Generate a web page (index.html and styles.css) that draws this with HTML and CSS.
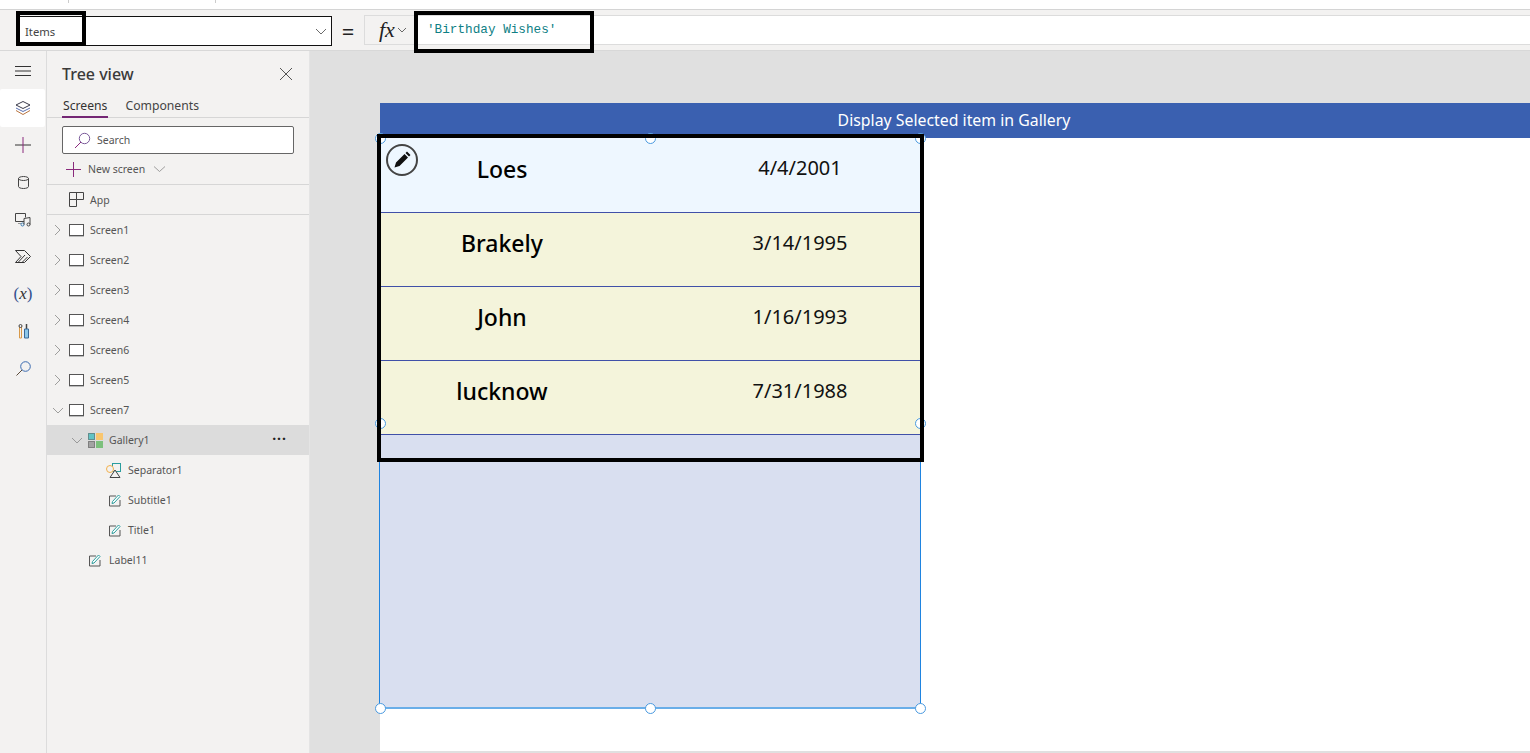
FILE: index.html
```html
<!DOCTYPE html>
<html lang="en">
<head>
<meta charset="utf-8">
<title>Tree view</title>
<link rel="stylesheet" href="styles.css">
</head>
<body>
<div class="strip"><i class="tick t1"></i><i class="tick t2"></i></div>
<div class="fbar">
  <div class="prop"><span class="prop-name">Items</span>
    <svg class="ic10" viewBox="0 0 10 10"><path d="M0 3l5 5 5-5" fill="none" stroke="#444" stroke-width=".8"/></svg>
  </div>
  <div class="eq">=</div>
  <div class="fxwrap">
    <div class="fx"><span class="fxt">fx</span><svg class="ic10" viewBox="0 0 10 10"><path d="M1 3l4 4 4-4" fill="none" stroke="#444" stroke-width=".8"/></svg></div>
    <div class="formula">'Birthday Wishes'</div>
  </div>
  <div class="mark mark-prop"></div>
  <div class="mark mark-formula"></div>
</div>
<div class="main">
  <nav class="rail">
    <div class="rail-i"><svg width="16" height="12" viewBox="0 0 16 12"><path d="M0 1.500h16M0 6h16M0 10.500h16" stroke="#333" fill="none"/></svg></div>
    <div class="rail-i on"><svg width="16" height="14" viewBox="0 0 16 14" fill="none"><path d="M8 .5l7 3.500-7 3.500-7-3.500z" stroke="#3a3a4a"/><path d="M1 7l7 3.500L15 7" stroke="#5a6fb0"/><path d="M1 9.500L8 13.500l7-4" stroke="#b8743f"/></svg></div>
    <div class="rail-i"><svg width="16" height="16" viewBox="0 0 16 16"><path d="M0 8h16" stroke="#333"/><path d="M8 0v16" stroke="#8a2a7c"/></svg></div>
    <div class="rail-i"><svg width="11" height="13" viewBox="0 0 11 13" fill="none" stroke="#444"><path d="M.5 2.500c0-1 2-2 5-2s5 1 5 2-2 2-5 2-5-1-5-2zM.5 2.500v8c0 1 2 2 5 2s5-1 5-2v-8"/></svg></div>
    <div class="rail-i"><svg width="16" height="14" viewBox="0 0 16 14" fill="none"><path d="M9 8.500H.5V.5h10v4" stroke="#444"/><path d="M3 10.500h3" stroke="#999"/><circle cx="7.500" cy="11.500" r="1.500" stroke="#3a7ab0"/><path d="M9 11.500V5.500l6-1v7" stroke="#444"/><circle cx="13.500" cy="11.500" r="1.500" stroke="#444"/></svg></div>
    <div class="rail-i"><svg width="16" height="13" viewBox="0 0 16 13" fill="none" stroke="#333"><path d="M.5.5h9l6 6-6 6h-9l5.500-6z"/><path d="M3 12.500L10 5M7 12.500l5.500-5.500"/></svg></div>
    <div class="rail-i"><span class="var"><span class="par">(</span><em>x</em><span class="par">)</span></span></div>
    <div class="rail-i"><svg width="11" height="15" viewBox="0 0 11 15" fill="none"><path d="M1.500 3v11h2V3" stroke="#d89a4a"/><circle cx="2.500" cy="2" r="1.500" stroke="#444"/><path d="M8.500 0v5" stroke="#444" stroke-width="1.500"/><path d="M6.500 5h4v9h-4z" fill="#8fc8ea" stroke="#3a6a9a"/></svg></div>
    <div class="rail-i"><svg width="15" height="15" viewBox="0 0 15 15" fill="none"><circle cx="9.500" cy="5.500" r="4.800" stroke="#3a6ab0"/><path d="M6 9L.5 14.500" stroke="#5a4a3a"/></svg></div>
  </nav>
  <aside class="tree">
    <div class="tree-head"><span class="tree-title">Tree view</span>
      <svg width="12" height="12" viewBox="0 0 12 12"><path d="M0 0l12 12M12 0L0 12" stroke="#555" fill="none"/></svg>
    </div>
    <div class="tabs"><span class="tab active">Screens</span><span class="tab">Components</span></div>
    <div class="search-wrap"><div class="search">
      <svg width="17" height="17" viewBox="0 0 17 17" fill="none"><circle cx="10.500" cy="6.500" r="5.200" stroke="#7a5a9a"/><path d="M7 10l-6 6" stroke="#8a2a7c"/></svg>
      <span>Search</span></div></div>
    <div class="new-screen">
      <svg width="15" height="15" viewBox="0 0 15 15"><path d="M0 7.500h15M7.500 0v15" stroke="#8a2a7c"/></svg>
      <span>New screen</span>
      <svg class="ic11" viewBox="0 0 11 10"><path d="M0 2.500l5.500 5 5.500-5" fill="none" stroke="#888" stroke-width=".8"/></svg>
    </div>
    <div class="row app">
      <svg width="15" height="15" viewBox="0 0 15 15" fill="none" stroke="#444"><path d="M.5.500h14v7h-7v7h-7zM.5 7.500h7M7.500.500v7"/></svg>
      <span class="lbl">App</span>
    </div>
    <div class="row lv1"><svg class="chev" viewBox="0 0 7 10"><path d="M1 0l5 5-5 5" fill="none" stroke="#888" stroke-width=".8"/></svg><span class="scr"></span><span class="lbl">Screen1</span></div>
    <div class="row lv1"><svg class="chev" viewBox="0 0 7 10"><path d="M1 0l5 5-5 5" fill="none" stroke="#888" stroke-width=".8"/></svg><span class="scr"></span><span class="lbl">Screen2</span></div>
    <div class="row lv1"><svg class="chev" viewBox="0 0 7 10"><path d="M1 0l5 5-5 5" fill="none" stroke="#888" stroke-width=".8"/></svg><span class="scr"></span><span class="lbl">Screen3</span></div>
    <div class="row lv1"><svg class="chev" viewBox="0 0 7 10"><path d="M1 0l5 5-5 5" fill="none" stroke="#888" stroke-width=".8"/></svg><span class="scr"></span><span class="lbl">Screen4</span></div>
    <div class="row lv1"><svg class="chev" viewBox="0 0 7 10"><path d="M1 0l5 5-5 5" fill="none" stroke="#888" stroke-width=".8"/></svg><span class="scr"></span><span class="lbl">Screen6</span></div>
    <div class="row lv1"><svg class="chev" viewBox="0 0 7 10"><path d="M1 0l5 5-5 5" fill="none" stroke="#888" stroke-width=".8"/></svg><span class="scr"></span><span class="lbl">Screen5</span></div>
    <div class="row lv1"><svg class="chevd" viewBox="0 0 10 7"><path d="M0 1l5 5 5-5" fill="none" stroke="#888" stroke-width=".8"/></svg><span class="scr"></span><span class="lbl">Screen7</span></div>
    <div class="row lv2 sel"><svg class="chevd" viewBox="0 0 10 7"><path d="M0 1l5 5 5-5" fill="none" stroke="#888" stroke-width=".8"/></svg>
      <svg class="gal" width="15" height="15" viewBox="0 0 15 15"><rect width="7" height="7" fill="#62c4c4"/><rect x="8" width="7" height="7" fill="#f9c66e"/><rect y="8" width="7" height="7" fill="#a3a3a3"/><rect x="8" y="8" width="7" height="7" fill="#7cc07c"/><path d="M.5.500h6v6h-6zM.5 8.500h6v6h-6z" fill="none" stroke="#666" stroke-width=".6"/></svg>
      <span class="lbl">Gallery1</span><span class="dots">···</span></div>
    <div class="row lv3"><svg width="15" height="15" viewBox="0 0 15 15" fill="none"><rect x="6.500" y=".5" width="8" height="8" stroke="#2a9d9d"/><circle cx="4" cy="6" r="3.500" fill="#f3f2f1" stroke="#f2b04c"/><path d="M9 7l5 7.500H4z" fill="#f3f2f1" stroke="#444"/></svg><span class="lbl">Separator1</span></div>
    <div class="row lv3"><svg width="15" height="14" viewBox="-3 -1 15 14" fill="none"><path d="M7 2H.5v10H11V6" stroke="#555"/><path d="M3 9.500l.5-2 6-6.500 1.500 1.500-6 6.500z" fill="#fff" stroke="#2a9d9d"/></svg><span class="lbl">Subtitle1</span></div>
    <div class="row lv3"><svg width="15" height="14" viewBox="-3 -1 15 14" fill="none"><path d="M7 2H.5v10H11V6" stroke="#555"/><path d="M3 9.500l.5-2 6-6.500 1.500 1.500-6 6.500z" fill="#fff" stroke="#2a9d9d"/></svg><span class="lbl">Title1</span></div>
    <div class="row lv2b"><svg width="12" height="14" viewBox="0 -1 12 14" fill="none"><path d="M7 2H.5v10H11V6" stroke="#555"/><path d="M3 9.500l.5-2 6-6.500 1.500 1.500-6 6.500z" fill="#fff" stroke="#2a9d9d"/></svg><span class="lbl">Label11</span></div>
  </aside>
  <section class="canvas">
    <div class="screen">
      <header class="banner">Display Selected item in Gallery</header>
      <div class="gallery">
        <div class="item first"><span class="name">Loes</span><span class="date">4/4/2001</span>
          <svg class="edit" width="32" height="32" viewBox="0 0 32 32"><circle cx="16" cy="16" r="15" fill="none" stroke="#444" stroke-width="2"/><path d="M8.500 23.500l1.500-5 8.500-8.500 3.500 3.500-8.500 8.500zM19.500 9l1.500-1.500 3.500 3.500-1.500 1.500z" fill="#111"/></svg>
        </div>
        <div class="item"><span class="name">Brakely</span><span class="date">3/14/1995</span></div>
        <div class="item"><span class="name">John</span><span class="date">1/16/1993</span></div>
        <div class="item"><span class="name">lucknow</span><span class="date">7/31/1988</span></div>
        <i class="h tl"></i><i class="h tm"></i><i class="h tr"></i>
        <i class="h ml"></i><i class="h mr"></i>
        <i class="h bl"></i><i class="h bm"></i><i class="h br"></i>
        <div class="mark mark-gal"></div>
      </div>
    </div>
  </section>
</div>
</body>
</html>
```
FILE: styles.css
```css
* { box-sizing: border-box; }
html, body { margin: 0; height: 753px; overflow: hidden; }
body { background: #fff; font-family: "Noto Sans", "Open Sans", sans-serif; color: #333; }

.strip { height: 10px; background: #fff; border-bottom: 1px solid #d4d4d4; position: relative; }
.tick { position: absolute; top: 0; width: 1px; height: 3px; background: #ccc; }
.t1 { left: 68px; }
.t2 { left: 215px; }

.fbar { height: 41px; background: #f3f2f1; border-bottom: 1px solid #d8d8d8; display: flex; align-items: flex-start; padding: 5px 0 0 17px; position: relative; }
.prop { width: 315px; height: 30px; margin-top: 1px; background: #fff; border: 1px solid #111; display: flex; align-items: center; justify-content: space-between; padding: 0 5px 0 7px; }
.prop-name { font-size: 11.300px; color: #444; margin-top: 1px; }
.ic10 { width: 10px; height: 10px; flex: none; }
.ic11 { width: 11px; height: 10px; flex: none; margin-left: 2px; }
.eq { width: 32px; text-align: center; font-size: 22px; line-height: 32px; color: #222; }
.fxwrap { flex: 1; height: 30px; display: flex; border: 1px solid #dcdcdc; border-right: 0; }
.fx { width: 50px; display: flex; align-items: center; gap: 2px; padding-left: 14px; flex: none; }
.fxt { font-family: "Liberation Serif", serif; font-style: italic; font-size: 22px; color: #222; }
.formula { flex: 1; background: #fff; border-left: 1px solid #d0d0d0; font-family: "Liberation Mono", "DejaVu Sans Mono", monospace; font-size: 12.700px; color: #0f7f85; padding: 6px 0 0 11px; }

.mark { position: absolute; border: 4px solid #000; pointer-events: none; }
.mark-prop { left: 16px; top: 1px; width: 70px; height: 35px; }
.mark-formula { left: 414px; top: 1px; width: 180px; height: 42px; }
.mark-gal { left: -3px; top: -4px; width: 547px; height: 328px; }

.main { display: flex; height: 702px; }
.rail { width: 47px; background: #f3f2f1; border-right: 1px solid #dcdcdc; display: flex; flex-direction: column; padding-top: 1px; flex: none; }
.rail-i { height: 37.250px; display: flex; align-items: center; justify-content: center; }
.rail-i.on { background: #fff; margin-right: 1px; border-radius: 2px; }
.var { font-family: "Liberation Serif", serif; font-size: 17px; color: #333; }
.var .par { color: #33508f; }

.tree { width: 263px; background: #f3f2f1; border-right: 1px solid #e4e4e4; flex: none; }
.tree-head { height: 46px; padding: 0 17px 0 15px; display: flex; align-items: center; justify-content: space-between; }
.tree-title { font-size: 16px; font-weight: 500; color: #3b3a39; }
.tabs { height: 21px; border-bottom: 1px solid #d6d6d6; display: flex; gap: 16px; padding-left: 15px; }
.tab { font-size: 12.200px; line-height: 17px; height: 21px; color: #444; padding: 0 1px; }
.tab.active { color: #333; border-bottom: 2px solid #742774; }
.search-wrap { padding: 8px 15px 0; }
.search { height: 28px; border: 1px solid #666; border-radius: 2px; background: #fff; display: flex; align-items: center; gap: 6px; padding-left: 11px; font-size: 10.500px; color: #555; }
.new-screen { height: 31px; padding-left: 19px; display: flex; align-items: center; gap: 7px; font-size: 10.500px; color: #555; border-bottom: 1px solid #d6d6d6; }
.row { height: 30px; display: flex; align-items: center; font-size: 10.500px; color: #555; position: relative; }
.app { padding-left: 22px; gap: 6px; border-bottom: 1px solid #d6d6d6; }
.lv1 { padding-left: 7px; }
.chev { width: 7px; height: 10px; margin-right: 8px; flex: none; }
.chevd { width: 10px; height: 7px; margin-right: 6px; flex: none; }
.lv1 .chevd { margin-left: -1px; }
.scr { width: 15px; height: 12px; border: 1px solid #555; background: #fff; box-shadow: 0 1px 0 #bbb; margin-right: 6px; flex: none; }
.lv2 { padding-left: 25px; }
.sel { background: #dcdcdc; }
.gal { margin-right: 6px; }
.dots { position: absolute; right: 22px; top: 6px; font-size: 14px; font-weight: 700; color: #222; letter-spacing: 1px; line-height: 16px; }
.lv3 { padding-left: 59px; gap: 7px; }
.lv2b { padding-left: 42px; gap: 8px; }

.canvas { flex: 1; background: #e0e0e0; padding: 52px 0 0 70px; min-width: 0; }
.screen { height: 648px; background: #fff; }
.banner { height: 35px; background: #3a60b0; color: #fff; text-align: center; font-size: 15.850px; line-height: 34px; padding-right: 2px; }
.gallery { width: 542px; height: 571px; margin-left: -1px; background: #d9dff0; border: 1px solid #1f84e0; border-top: 0; border-bottom: 2px solid #6aaee8; position: relative; }
.item { height: 74px; background: #f4f4db; border-bottom: 1px solid #4050a8; position: relative; color: #000; }
.item.first { height: 75px; background: #eef7ff; }
.name { position: absolute; left: 0; width: 244px; text-align: center; top: 12px; font-size: 23px; line-height: 36px; font-weight: 500; }
.first .name { top: 13px; }
.date { position: absolute; left: 340px; width: 160px; text-align: center; top: 13px; font-size: 20px; line-height: 34px; color: #111; }
.edit { position: absolute; left: 6px; top: 6px; }
.h { position: absolute; width: 11px; height: 11px; border-radius: 50%; background: #fff; border: 1.500px solid #4a9ae0; }
.tl { left: -5px; top: -5px; }
.tm { left: 265px; top: -5px; }
.tr { left: 535px; top: -5px; }
.ml { left: -5px; top: 280px; }
.mr { left: 535px; top: 280px; }
.bl { left: -5px; top: 565px; }
.bm { left: 265px; top: 565px; }
.br { left: 535px; top: 565px; }
```
